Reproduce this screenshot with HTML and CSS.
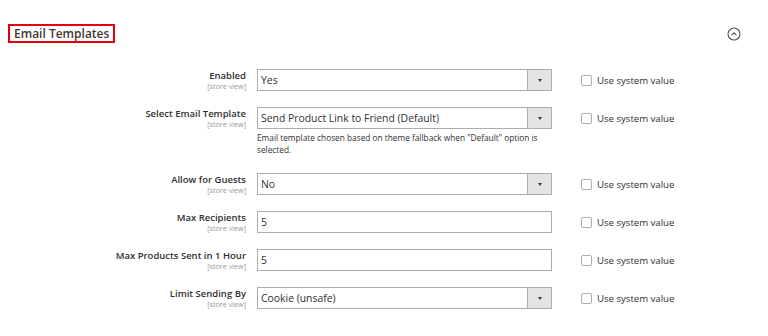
FILE: index.html
```html
<!DOCTYPE html>
<html>
<head>
    <title>Email Templates</title>
    <link rel="stylesheet" href="styles.css">
</head>
<body>
    <div class="section">
        <div class="section-head">
            <span class="section-title">Email Templates</span>
            <span class="collapse">
                <svg width="14" height="14" viewBox="0 0 14 14">
                    <circle cx="7" cy="7" r="6" fill="none" stroke="#555" stroke-width="1.1"/>
                    <path d="M4.6 8.1 L7 5.8 L9.4 8.1" fill="none" stroke="#555" stroke-width="1.2"/>
                </svg>
            </span>
        </div>

        <div class="fields">
            <div class="row">
                <div class="label">Enabled<span class="scope">[store view]</span></div>
                <div class="value">
                    <div class="select"><span>Yes</span><i class="arrow"></i></div>
                </div>
                <label class="inherit"><span class="check"></span>Use system value</label>
            </div>

            <div class="row">
                <div class="label">Select Email Template<span class="scope">[store view]</span></div>
                <div class="value">
                    <div class="select"><span>Send Product Link to Friend (Default)</span><i class="arrow"></i></div>
                    <p class="note">Email template chosen based on theme fallback when "Default" option is selected.</p>
                </div>
                <label class="inherit"><span class="check"></span>Use system value</label>
            </div>

            <div class="row">
                <div class="label">Allow for Guests<span class="scope">[store view]</span></div>
                <div class="value">
                    <div class="select"><span>No</span><i class="arrow"></i></div>
                </div>
                <label class="inherit"><span class="check"></span>Use system value</label>
            </div>

            <div class="row">
                <div class="label">Max Recipients<span class="scope">[store view]</span></div>
                <div class="value">
                    <div class="input">5</div>
                </div>
                <label class="inherit"><span class="check"></span>Use system value</label>
            </div>

            <div class="row">
                <div class="label">Max Products Sent in 1 Hour<span class="scope">[store view]</span></div>
                <div class="value">
                    <div class="input">5</div>
                </div>
                <label class="inherit"><span class="check"></span>Use system value</label>
            </div>

            <div class="row">
                <div class="label">Limit Sending By<span class="scope">[store view]</span></div>
                <div class="value">
                    <div class="select"><span>Cookie (unsafe)</span><i class="arrow"></i></div>
                </div>
                <label class="inherit"><span class="check"></span>Use system value</label>
            </div>
        </div>
    </div>
</body>
</html>
```

FILE: styles.css
```css
body { margin: 0; background: #fff; font-family: "Open Sans", "Liberation Sans", sans-serif; color: #303030; }
.section { padding: 24px 0 0 8px; }
.section-head { display: flex; justify-content: space-between; align-items: center; padding-right: 27px; }
.section-title { border: 2px solid #e5000f; padding: 0 4px; font-size: 12px; font-weight: 600; line-height: 15px; color: #41362f; }
.collapse { display: flex; }
.fields { padding-top: 26px; }
.row { display: grid; grid-template-columns: 238px 295px 1fr; column-gap: 11px; margin-bottom: 16px; align-items: start; }
.label { text-align: right; font-size: 9.5px; font-weight: 600; line-height: 13px; color: #303030; }
.scope { display: block; font-size: 7.2px; font-weight: 400; color: #999; line-height: 9px; }
.select, .input { box-sizing: border-box; height: 22px; border: 1px solid #adadad; display: flex; align-items: center; font-size: 10.4px; color: #303030; background: #fff; }
.select span, .input { padding-left: 3px; }
.select span { flex: 1; }
.arrow { width: 23px; height: 20px; border-left: 1px solid #adadad; background: #e3e3e3; display: flex; align-items: center; justify-content: center; }
.arrow::after { content: ""; border-left: 2.5px solid transparent; border-right: 2.5px solid transparent; border-top: 3px solid #41362f; }
.note { margin: 3px 0 1px; font-size: 8.3px; line-height: 12px; color: #303030; }
.inherit { display: flex; align-items: center; font-size: 9.6px; color: #303030; margin-left: 18px; height: 22px; }
.check { width: 11px; height: 11px; box-sizing: border-box; border: 1px solid #adadad; border-radius: 2px; margin-right: 5px; background: #fff; }
```
